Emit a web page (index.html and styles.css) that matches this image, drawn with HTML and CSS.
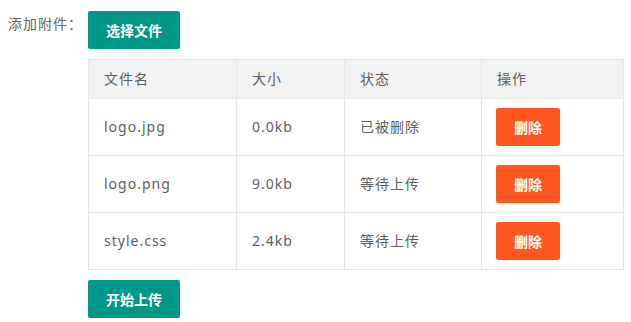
FILE: index.html
```html
<!DOCTYPE html>
<html lang="zh-CN">
<head>
<meta charset="utf-8">
<title>上传</title>
<link rel="stylesheet" href="styles.css">
</head>
<body>
<div class="form-item">
  <label class="form-label">添加附件：</label>
  <div class="form-block">
    <button class="btn btn-normal" type="button">选择文件</button>
    <table class="upload-table">
      <colgroup>
        <col class="c1"><col class="c2"><col class="c3"><col class="c4">
      </colgroup>
      <thead>
        <tr><th>文件名</th><th>大小</th><th>状态</th><th>操作</th></tr>
      </thead>
      <tbody>
        <tr><td>logo.jpg</td><td>0.0kb</td><td>已被删除</td><td><button class="btn btn-danger" type="button">删除</button></td></tr>
        <tr><td>logo.png</td><td>9.0kb</td><td>等待上传</td><td><button class="btn btn-danger" type="button">删除</button></td></tr>
        <tr><td>style.css</td><td>2.4kb</td><td>等待上传</td><td><button class="btn btn-danger" type="button">删除</button></td></tr>
      </tbody>
    </table>
    <button class="btn btn-normal" type="button">开始上传</button>
  </div>
</div>
</body>
</html>
```

FILE: styles.css
```css
html, body {
  margin: 0;
  padding: 0;
  background: #ffffff;
}
body {
  font-family: "Noto Sans", "Noto Sans CJK SC", sans-serif;
  font-size: 14px;
  color: #666666;
}
.form-item {
  display: flex;
  align-items: flex-start;
  padding: 11px 0 0 8px;
}
.form-label {
  width: 80px;
  line-height: 26px;
  color: #666666;
  letter-spacing: 1px;
}
.form-block {
  display: flex;
  flex-direction: column;
  align-items: flex-start;
  gap: 10px;
}
.btn {
  height: 38px;
  line-height: 38px;
  padding: 0 18px;
  border: none;
  border-radius: 2px;
  color: #ffffff;
  font-family: "Noto Sans CJK SC", sans-serif;
  font-size: 14px;
  font-weight: bold;
  cursor: pointer;
}
.btn-normal {
  background: #009688;
}
.btn-danger {
  background: #ff5722;
  display: block;
  margin-left: -1px;
}
.upload-table {
  border-collapse: collapse;
  table-layout: fixed;
  width: 535px;
  border: 1px solid #e6e6e6;
}
.c1 { width: 148px; }
.c2 { width: 108px; }
.c3 { width: 137px; }
.c4 { width: 142px; }
.upload-table th,
.upload-table td {
  border: 1px solid #e6e6e6;
  padding: 9px 15px;
  line-height: 20px;
  text-align: left;
  font-weight: normal;
  color: #5f5f5f;
  letter-spacing: 1px;
}
.upload-table th {
  background: #f2f2f2;
}
```
